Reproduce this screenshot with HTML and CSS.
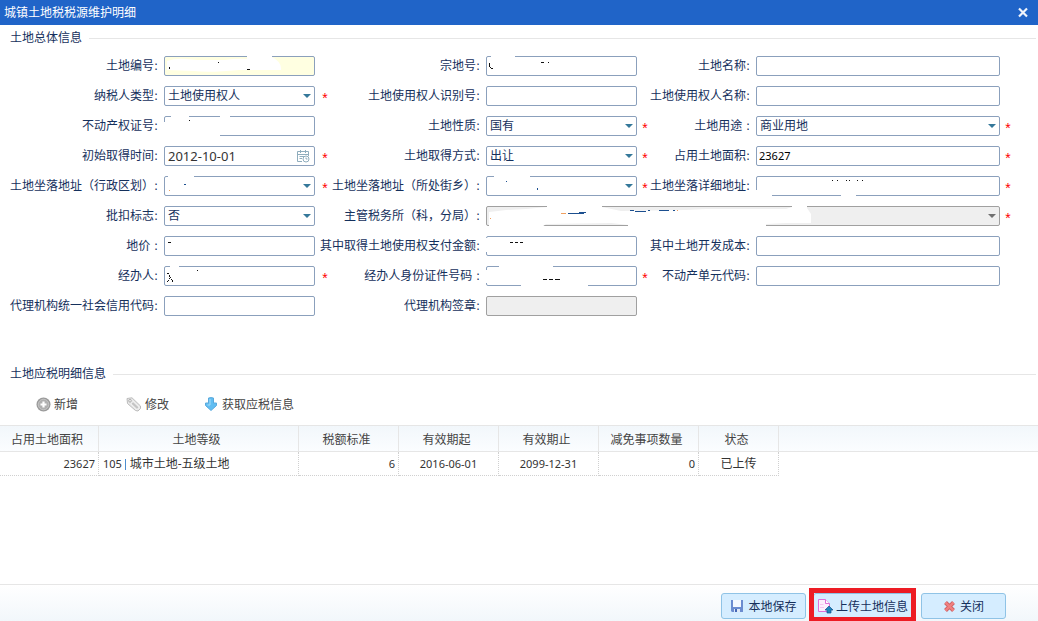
FILE: index.html
```html
<!DOCTYPE html>
<html lang="zh-CN">
<head>
    <meta charset="UTF-8">
    <title>城镇土地税税源维护明细</title>
    <link rel="stylesheet" href="styles.css">
</head>
<body>
    <header class="titlebar">
        <h1>城镇土地税税源维护明细</h1>
        <button class="close" aria-label="关闭窗口">
            <svg width="12" height="12" viewBox="0 0 12 12"><path d="M2 1.500l8 8M10 1.500l-8 8" stroke="#f0f4fc" stroke-width="2.200"/></svg>
        </button>
    </header>

    <h2 class="group-title">土地总体信息</h2>
    <form class="form" id="landForm">
        <label for="tdbh">土地编号:</label>
        <div class="field">
            <input id="tdbh" class="key" type="text">
            <svg class="mask"><path class="w" d="M3 5Q12 2 22 3L34 4L60 4Q75 2 83 3V-1H108V1Q118 6 117 14L75 14Q45 17 30 15L3 14Z"/><path class="k" d="M5 11h1v2h-1zM54 6h1v1h-1zM83 13h3v1h-3z"/></svg>
        </div>
        <span class="star"></span>
        <label for="zdh">宗地号:</label>
        <div class="field">
            <input id="zdh" type="text">
            <svg class="mask"><path class="w" d="M5-1H29V2H5Z"/><path class="k" d="M3 7h1v4h-1zM4 11h1v1h-1zM5 12h2v1h-2zM55 6h3v1h-3zM62 6h1v1h-1z"/></svg>
        </div>
        <span class="star"></span>
        <label for="tdmc">土地名称:</label>
        <div class="field"><input id="tdmc" type="text"></div>
        <span class="star"></span>

        <label for="nsrlx">纳税人类型:</label>
        <div class="field select"><select id="nsrlx"><option>土地使用权人</option></select></div>
        <span class="star">*</span>
        <label for="syqsbh">土地使用权人识别号:</label>
        <div class="field"><input id="syqsbh" type="text"></div>
        <span class="star"></span>
        <label for="syqmc">土地使用权人名称:</label>
        <div class="field"><input id="syqmc" type="text"></div>
        <span class="star"></span>

        <label for="bdcqzh">不动产权证号:</label>
        <div class="field">
            <input id="bdcqzh" type="text">
            <svg class="mask"><path class="w" d="M-1 6H7V-1H25V3H56V-1H66V3L56 10V21H-1Z"/><path class="k" d="M25 4h1v1h-1z"/></svg>
        </div>
        <span class="star"></span>
        <label for="tdxz">土地性质:</label>
        <div class="field select"><select id="tdxz"><option>国有</option></select></div>
        <span class="star">*</span>
        <label for="tdyt">土地用途 :</label>
        <div class="field select"><select id="tdyt"><option>商业用地</option></select></div>
        <span class="star">*</span>

        <label for="qdsj">初始取得时间:</label>
        <div class="field">
            <input id="qdsj" class="date" type="text" value="2012-10-01">
            <svg class="calendar" viewBox="0 0 14 14" fill="none" stroke="#8fadbd"><path d="M6 12.500H1.500V2.500H12.500V7M1.500 5.500H12.500M4.500 1V4M9.500 1V4M3.500 7.500H8M3.500 9.500H6"/><circle cx="10" cy="10" r="3"/><path d="M10 8.500V10H11.500"/></svg>
        </div>
        <span class="star">*</span>
        <label for="qdfs">土地取得方式:</label>
        <div class="field select"><select id="qdfs"><option>出让</option></select></div>
        <span class="star">*</span>
        <label for="zymj">占用土地面积:</label>
        <div class="field"><input id="zymj" type="text" value="23627"></div>
        <span class="star">*</span>

        <label for="xzqh">土地坐落地址（行政区划）:</label>
        <div class="field select">
            <select id="xzqh"><option></option></select>
            <svg class="mask"><path class="w" d="M4-1H30V2H4Z"/><path class="o" d="M5 14h1v1h-1z"/><path class="b" d="M20 8h2v1h-2z"/></svg>
        </div>
        <span class="star">*</span>
        <label for="jx">土地坐落地址（所处街乡）:</label>
        <div class="field select">
            <select id="jx"><option></option></select>
            <svg class="mask"><path class="w" d="M8-1H44V2H8Z"/><path class="b" d="M20 5h1v1h-1zM51 12h1v2h-1z"/></svg>
        </div>
        <span class="star">*</span>
        <label for="xxdz">土地坐落详细地址:</label>
        <div class="field">
            <input id="xxdz" type="text">
            <svg class="mask"><path class="w" d="M-1 14H16V21H-1ZM85 18H100V21H85Z"/><path class="k" d="M76 4h1v1h-1zM81 4h1v1h-1zM90 4h1v1h-1zM93 4h1v1h-1zM101 4h1v1h-1zM106 4h1v1h-1z"/></svg>
        </div>
        <span class="star">*</span>

        <label for="pkbz">批扣标志:</label>
        <div class="field select"><select id="pkbz"><option>否</option></select></div>
        <span class="star"></span>
        <label for="swsks">主管税务所（科，分局）:</label>
        <div class="field select wide">
            <select id="swsks" disabled><option></option></select>
            <svg class="mask"><path class="w" d="M3 21V6L20 4L40 3L61 1V-1H116V1L135 5L200 4L220 3L300 3L306 1V-1H321V2L325 8V17H300L280 18V21H142V19L125 17L60 18L56 21Z"/><path class="b" d="M82 7h16v1h-16zM93 6h7v1h-7zM144 4h4v1h-4zM149 5h11v1h-11zM162 4h2v1h-2zM173 4h10v1h-10zM187 4h2v1h-2z"/><path class="o" d="M4 12h1v1h-1zM75 7h5v1h-5zM191 4h1v1h-1z"/></svg>
        </div>
        <span class="star">*</span>

        <label for="dj">地价 :</label>
        <div class="field">
            <input id="dj" type="text">
            <svg class="mask"><path class="k" d="M4 6h3v1h-3z"/></svg>
        </div>
        <span class="star"></span>
        <label for="zfje">其中取得土地使用权支付金额:</label>
        <div class="field">
            <input id="zfje" type="text">
            <svg class="mask"><path class="w" d="M-1 2H2V16H-1Z"/><path class="k" d="M24 6h3v1h-3zM29 6h3v1h-3zM34 6h3v1h-3z"/></svg>
        </div>
        <span class="star"></span>
        <label for="kfcb">其中土地开发成本:</label>
        <div class="field"><input id="kfcb" type="text"></div>
        <span class="star"></span>

        <label for="jbr">经办人:</label>
        <div class="field">
            <input id="jbr" type="text">
            <svg class="mask"><path class="w" d="M6-1H15V2H6Z"/><path class="k" d="M3 7h2v1h-2zM5 9h1v2h-1zM6 11h1v1h-1zM5 12h1v1h-1zM4 14h1v1h-1zM3 15h1v1h-1zM7 13h1v1h-1zM8 14h1v2h-1zM33 4h1v1h-1z"/></svg>
        </div>
        <span class="star">*</span>
        <label for="sfz">经办人身份证件号码 :</label>
        <div class="field">
            <input id="sfz" type="text">
            <svg class="mask"><path class="w" d="M13-1H67V2H13ZM-1 4H2V17H-1ZM35 18H102V21H35Z"/><path class="k" d="M57 13h4v1h-4zM63 13h4v1h-4zM69 13h5v1h-5z"/></svg>
        </div>
        <span class="star">*</span>
        <label for="dydm">不动产单元代码:</label>
        <div class="field"><input id="dydm" type="text"></div>
        <span class="star"></span>

        <label for="xydm">代理机构统一社会信用代码:</label>
        <div class="field"><input id="xydm" type="text"></div>
        <span class="star"></span>
        <label for="qz">代理机构签章:</label>
        <div class="field"><input id="qz" type="text" disabled></div>
    </form>

    <h2 class="group-title">土地应税明细信息</h2>
    <div class="toolbar">
        <button>
            <svg width="15" height="15" viewBox="0 0 15 15"><circle cx="7.500" cy="7.500" r="7" fill="#999"/><circle cx="7.500" cy="7.500" r="5.300" fill="#b0b0b0" stroke="#ccc" stroke-width=".8"/><path d="M7.500 4.500v6M4.500 7.500h6" stroke="#fff" stroke-width="2.200"/></svg>
            新增
        </button>
        <button>
            <svg width="16" height="15" viewBox="0 0 16 15"><path d="M1 1.500L6 .8L14.500 9V11.500L12 14L9.500 13.500L1.500 6.500Z" fill="#e8e8e8" stroke="#bbb"/><circle cx="4" cy="3.800" r="1.300" fill="#fff" stroke="#aaa"/><path d="M7 4.500L13 10.300L11 12.500L5 6.800Z" fill="#c4c4c4" stroke="#fff" stroke-width=".7"/></svg>
            修改
        </button>
        <button>
            <svg width="14" height="14" viewBox="0 0 14 14"><path d="M4.500 1Q7 .2 9.500 1V6H12.500V8.500L7 13.500L1.500 8.500V6H4.500Z" fill="#62bef2" stroke="#5aa9dc"/><path d="M6 2V8H3.500" stroke="#a5dcf8" fill="none"/></svg>
            获取应税信息
        </button>
    </div>

    <table class="grid">
        <colgroup>
            <col class="c-area"><col class="c-level"><col class="c-std"><col class="c-std"><col class="c-std"><col class="c-std"><col class="c-state"><col>
        </colgroup>
        <thead>
            <tr>
                <th>占用土地面积</th>
                <th>土地等级</th>
                <th>税额标准</th>
                <th>有效期起</th>
                <th>有效期止</th>
                <th>减免事项数量</th>
                <th>状态</th>
                <th></th>
            </tr>
        </thead>
        <tbody>
            <tr>
                <td class="num">23627</td>
                <td class="txt">105 <i></i><span>城市土地-五级土地</span></td>
                <td class="num">6</td>
                <td>2016-06-01</td>
                <td>2099-12-31</td>
                <td class="num">0</td>
                <td><span>已上传</span></td>
                <td></td>
            </tr>
        </tbody>
    </table>

    <footer class="footer">
        <button class="btn">
            <svg width="14" height="14" viewBox="0 0 14 14"><path d="M1 1H13V13H2L1 12Z" fill="#6c8cd0"/><path d="M3 1H11V8H3Z" fill="#f4f8ff"/><path d="M4 10H10V13H4Z" fill="#dfe8f6"/><path d="M5 10H7V13H5Z" fill="#4467b5"/></svg>
            本地保存
        </button>
        <button class="btn upload">
            <svg width="17" height="16" viewBox="0 0 17 16"><path d="M1.500 1.500H8.500L12.500 5.500V13.500H1.500Z" fill="#fdeefd" stroke="#e070d8"/><path d="M8.500 1.500V5.500H12.500" fill="#fff" stroke="#e070d8"/><path d="M3 6.500H6.500M3 9.500H7" stroke="#f6c4f0"/><path d="M12 8L16 12H14V15H10V12H8Z" fill="#1f86b8" stroke="#164f90" stroke-width=".7"/></svg>
            上传土地信息
        </button>
        <button class="btn">
            <svg width="13" height="13" viewBox="0 0 13 13"><path d="M2.500 2.500L10.500 10.500M10.500 2.500L2.500 10.500" stroke="#cd6264" stroke-width="4"/><path d="M2.500 2.500L10.500 10.500M10.500 2.500L2.500 10.500" stroke="#f08080" stroke-width="2.400"/></svg>
            关闭
        </button>
    </footer>
</body>
</html>
```
FILE: styles.css
```css
* {
    box-sizing: border-box;
}
body {
    margin: 0;
    min-height: 100vh;
    display: flex;
    flex-direction: column;
    background: #fff;
    color: #15305c;
    font: 12px/16px "DejaVu Sans", "Noto Sans CJK SC", sans-serif;
}
h1, h2 {
    margin: 0;
    font-size: 12px;
    font-weight: normal;
}
button, input, select {
    font-family: "Noto Sans", "Noto Sans CJK SC", sans-serif;
    font-size: 12px;
    margin: 0;
}
button {
    cursor: pointer;
}
.titlebar {
    display: flex;
    align-items: center;
    justify-content: space-between;
    height: 25px;
    padding: 0 9px 0 4px;
    background: #2064c8;
    color: #fff;
}
.close {
    display: flex;
    padding: 0;
    border: none;
    background: none;
}
.group-title {
    display: flex;
    align-items: center;
    gap: 7px;
    height: 26px;
    padding: 0 2px 0 10px;
}
.group-title::after {
    content: "";
    flex: 1;
    height: 1px;
    background: #e6e6e6;
}

/* 表单 */
.form {
    display: grid;
    grid-template-columns: 164px 151fr 20px 151px 151fr 16px 103px 244fr 16px;
    grid-auto-rows: 20px;
    row-gap: 10px;
    padding: 5px 22px 45px 0;
}
.form label {
    display: flex;
    justify-content: flex-end;
    align-items: center;
    padding-right: 6px;
    white-space: pre;
}
.star {
    font-family: "Liberation Sans", sans-serif;
    font-size: 14px;
    line-height: 24px;
    text-align: center;
    color: #f00;
}
.field {
    position: relative;
    min-width: 0;
}
.wide {
    grid-column: span 4;
}
.field input,
.field select {
    display: block;
    width: 100%;
    height: 20px;
    padding: 0 3px 2px;
    border: 1px solid #8ba0bc;
    border-radius: 2px;
    background: #fff;
    color: #15305c;
    outline: none;
    appearance: none;
}
.field input {
    padding: 0 2px 1px;
    font-size: 11px;
    color: #000;
}
.field .key {
    background: #ffffe1;
}
.field .date {
    padding: 0 3px 1px;
    font-size: 13px;
    color: #333;
}
.field input:disabled,
.field select:disabled {
    background: #efefef;
    border-color: #a0a0a0;
    opacity: 1;
}
.select::after {
    content: "";
    position: absolute;
    top: 8px;
    right: 4px;
    border: 4px solid transparent;
    border-top-color: #35789a;
    border-bottom: none;
}
.wide::after {
    border-top-color: #707070;
}
.calendar {
    position: absolute;
    top: 3px;
    right: 5px;
    width: 14px;
    height: 14px;
}
/* 遮盖敏感内容 */
.mask {
    position: absolute;
    top: 0;
    left: 0;
    width: 100%;
    height: 100%;
    overflow: visible;
    pointer-events: none;
}
.w { fill: #fff; }
.k { fill: #111; }
.b { fill: #1c4f8f; }
.o { fill: #f0a060; }

/* 工具栏 */
.toolbar {
    display: flex;
    height: 38px;
    padding: 0 36px;
}
.toolbar button {
    display: flex;
    align-items: center;
    gap: 3px;
    padding: 0;
    margin-right: 35px;
    height: 34px;
    border: none;
    background: none;
    color: #444;
}
.toolbar button:first-child {
    margin-right: 48px;
}
.toolbar button:last-child {
    gap: 4px;
}

.grid {
    width: 100%;
    table-layout: fixed;
    border-collapse: separate;
    border-spacing: 0;
    color: #333;
}
.c-area { width: 99px; }
.c-level { width: 200px; }
.c-std { width: 100px; }
.c-state { width: 80px; }
.grid th {
    height: 27px;
    padding: 2px 4px 0 0;
    border: 1px solid #e6e6e6;
    border-left: none;
    background: linear-gradient(#f2f7fb, #fbfdff);
    font-weight: normal;
    color: #444;
}
.grid td {
    height: 24px;
    padding: 0;
    border: 1px dotted #d0d0d0;
    border-top: none;
    border-left: none;
    font: 11px/16px "Noto Sans", "Noto Sans CJK SC", sans-serif;
    text-align: center;
}
.grid th:last-child {
    border-right: none;
}
.grid td:last-child {
    border: none;
}
.grid td span {
    font-size: 12px;
}
.grid .num {
    padding-right: 3px;
    text-align: right;
}
.grid .txt {
    padding-left: 4px;
    text-align: left;
}
.txt i {
    display: inline-block;
    width: 1px;
    height: 11px;
    margin-right: 4px;
    vertical-align: -2px;
    background: #4c8fd0;
}

.footer {
    display: flex;
    justify-content: flex-end;
    align-items: flex-start;
    gap: 7px;
    height: 37px;
    margin-top: auto;
    padding: 8px 32px 0 0;
    border-top: 1px solid #e6e6e6;
    background: linear-gradient(#fff, #f2f7fb);
}
.btn {
    display: flex;
    align-items: center;
    justify-content: center;
    gap: 4px;
    width: 85px;
    height: 26px;
    padding: 0;
    border: 1px solid #8fc3e6;
    border-radius: 3px;
    background: #d5edff;
    color: #15305c;
}
.upload {
    position: relative;
    width: 101px;
    gap: 2px;
    padding-right: 2px;
}
.upload::after {
    content: "";
    position: absolute;
    top: -6px;
    right: -3px;
    bottom: -4px;
    left: -5px;
    border: 5px solid #ed1c24;
}
```
